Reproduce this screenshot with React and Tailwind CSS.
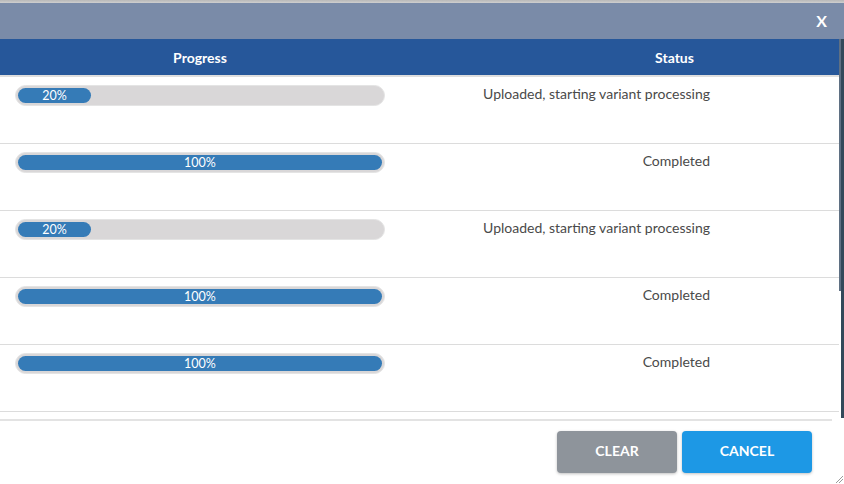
import React from "react";

const rows = [
  { pct: 20, status: "Uploaded, starting variant processing" },
  { pct: 100, status: "Completed" },
  { pct: 20, status: "Uploaded, starting variant processing" },
  { pct: 100, status: "Completed" },
  { pct: 100, status: "Completed" },
];

function Bar({ pct }) {
  return (
    <div className="h-[21px] w-[370px] rounded-full border border-[#e4e4e4] bg-[#d9d7d8] p-[2px]">
      <div
        className="flex h-full items-center justify-center rounded-full bg-[#357bb7] pt-[2px] text-[12.5px] leading-none text-white"
        style={{ width: pct === 100 ? "100%" : "73px" }}
      >
        {pct}%
      </div>
    </div>
  );
}

export default function App() {
  return (
    <div
      className="relative flex h-[484px] w-[844px] flex-col overflow-hidden bg-white"
      style={{ fontFamily: "Lato, 'Open Sans', sans-serif" }}
    >
      <div className="h-[3px] bg-gradient-to-b from-[#b8b8b8] to-[#cfcfcf]" />
      <div className="flex h-[36px] items-center justify-end bg-[#7a8ba8] pr-[17px]">
        <span className="text-[16px] font-bold leading-none text-white">X</span>
      </div>
      <div className="flex h-[379px]">
        <div className="flex w-[839px] flex-col">
          <div className="flex h-[38px] border-b-2 border-[#dedede] bg-[#26579a] text-[14px] font-bold text-white">
            <div className="flex w-[400px] items-center justify-center">Progress</div>
            <div className="w-[110px]" />
            <div className="flex flex-1 items-center justify-center">Status</div>
          </div>
          {rows.map((r, i) => (
            <div key={i} className="flex h-[67px] border-b border-[#dcdcdc] pt-2">
              <div className="w-[400px] pl-[15px]">
                <Bar pct={r.pct} />
              </div>
              <div className="-mt-px flex flex-1 justify-end pr-[129px] text-[14px] leading-[20px] text-[#4a4a4a]">
                {r.status}
              </div>
            </div>
          ))}
        </div>
        <div className="flex w-[5px]">
          <div className="flex h-full w-[2px] flex-col">
            <div className="h-[252px] bg-[#5f7083]" />
            <div className="flex-1 bg-white" />
          </div>
          <div className="h-full flex-1 bg-[#33495a]" />
        </div>
      </div>
      <div className="mt-px h-[2px] w-[832px] bg-[#e3e3e3]" />
      <div className="flex justify-end gap-[5px] pr-[32px] pt-[10px]">
        <button className="h-[42px] w-[120px] rounded-[4px] bg-[#8e949b] pb-[4px] text-[14px] font-bold text-white shadow-[0_1px_3px_rgba(0,0,0,0.25)]">
          CLEAR
        </button>
        <button className="h-[42px] w-[130px] rounded-[4px] bg-[#1d98e5] pb-[4px] text-[14px] font-bold text-white shadow-[0_1px_3px_rgba(0,0,0,0.25)]">
          CANCEL
        </button>
      </div>
      <svg className="absolute bottom-[1px] right-[1px]" width="8" height="8" viewBox="0 0 8 8">
        <line x1="1" y1="8" x2="8" y2="1" stroke="#9a9a9a" strokeWidth="1" />
        <line x1="4" y1="8" x2="8" y2="4" stroke="#9a9a9a" strokeWidth="1" />
      </svg>
    </div>
  );
}
